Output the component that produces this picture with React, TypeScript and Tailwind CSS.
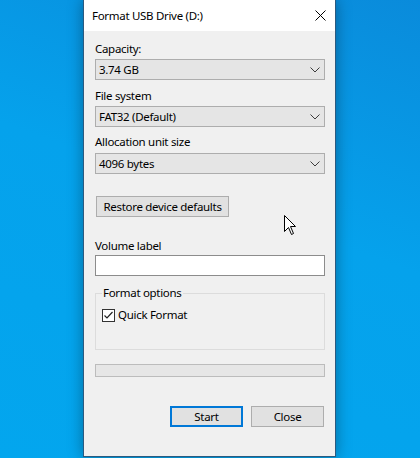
import React from "react";

function Chevron() {
  return (
    <svg width="10" height="6" viewBox="0 0 10 6" className="shrink-0">
      <polyline points="0.5,0.5 5,5 9.5,0.5" fill="none" stroke="#3c3c3c" strokeWidth="1" />
    </svg>
  );
}

function Combo({ value }: { value: string }) {
  return (
    <div className="mt-[2px] h-[21px] w-[230px] flex items-center justify-between border border-[#adadad] bg-[#e5e5e5] pl-[3px] pr-[4px]">
      <span className="leading-[16px]">{value}</span>
      <Chevron />
    </div>
  );
}

export default function App() {
  return (
    <div className="w-[420px] h-[458px] overflow-hidden bg-[linear-gradient(200deg,#0a8bdb_0%,#05a2ec_45%,#03a6ee_100%)] pl-[83px] text-[11.5px] tracking-[-0.3px] text-black font-['Noto_Sans',sans-serif]">
      <div className="relative w-[253px] h-[457px] border-x border-b border-[#2b5a80] bg-[#f0f0f0] flex flex-col shadow-[0_0_14px_rgba(0,0,0,0.35)]">
        <div className="h-[31px] bg-white flex items-center justify-between pl-[8px] pr-[9px]">
          <span className="leading-[16px]">Format USB Drive (D:)</span>
          <svg width="11" height="11" viewBox="0 0 11 11">
            <line x1="0.5" y1="0.5" x2="10.5" y2="10.5" stroke="#000" strokeWidth="1" />
            <line x1="10.5" y1="0.5" x2="0.5" y2="10.5" stroke="#000" strokeWidth="1" />
          </svg>
        </div>
        <div className="flex flex-col pl-[11px] pr-[9px]">
          <div className="mt-[10px] h-[16px] leading-[16px]">Capacity:</div>
          <Combo value="3.74 GB" />
          <div className="mt-[8px] h-[16px] leading-[16px]">File system</div>
          <Combo value="FAT32 (Default)" />
          <div className="mt-[7px] h-[16px] leading-[16px]">Allocation unit size</div>
          <div className="mt-[1px]">
            <Combo value="4096 bytes" />
          </div>
          <div className="mt-[22px] ml-[1px] h-[21px] w-[133px] flex items-center justify-center border border-[#adadad] bg-[#e1e1e1] leading-[16px]">
            Restore device defaults
          </div>
          <div className="mt-[21px] h-[16px] leading-[16px]">Volume label</div>
          <div className="mt-[1px] h-[21px] w-[230px] border border-[#8c8c8c] bg-white" />
          <fieldset className="mt-[9px] h-[65px] w-[230px] border border-[#dcdcdc] pl-[6px] pr-[6px]">
            <legend className="px-[1px] leading-[16px]">Format options</legend>
            <div className="mt-[6px] flex items-center gap-[3px] h-[16px]">
              <div className="w-[13px] h-[13px] border border-[#333333] bg-white flex items-center justify-center">
                <svg width="11" height="11" viewBox="0 0 11 11">
                  <polyline points="1.5,5.5 4,8 9.5,2" fill="none" stroke="#222" strokeWidth="1.2" />
                </svg>
              </div>
              <span className="leading-[16px]">Quick Format</span>
            </div>
          </fieldset>
          <div className="mt-[14px] h-[13px] w-[230px] border border-[#bcbcbc] bg-[#e6e6e6]" />
          <div className="mt-[29px] flex justify-end gap-[8px] pr-[2px]">
            <div className="h-[21px] w-[73px] flex items-center justify-center border-2 border-[#0078d7] bg-[#e1e1e1] leading-[16px]">
              Start
            </div>
            <div className="h-[21px] w-[73px] flex items-center justify-center border border-[#adadad] bg-[#e1e1e1] leading-[16px]">
              Close
            </div>
          </div>
        </div>
        <svg className="absolute left-[200px] top-[215px]" width="13" height="21" viewBox="0 0 13 21">
          <path d="M0.5,0.5 L0.5,16.5 L4.5,12.5 L7.5,19.5 L9.5,18.5 L6.5,11.5 L11.5,11.5 Z" fill="#fff" stroke="#000" strokeWidth="1" strokeLinejoin="miter" />
        </svg>
      </div>
    </div>
  );
}
